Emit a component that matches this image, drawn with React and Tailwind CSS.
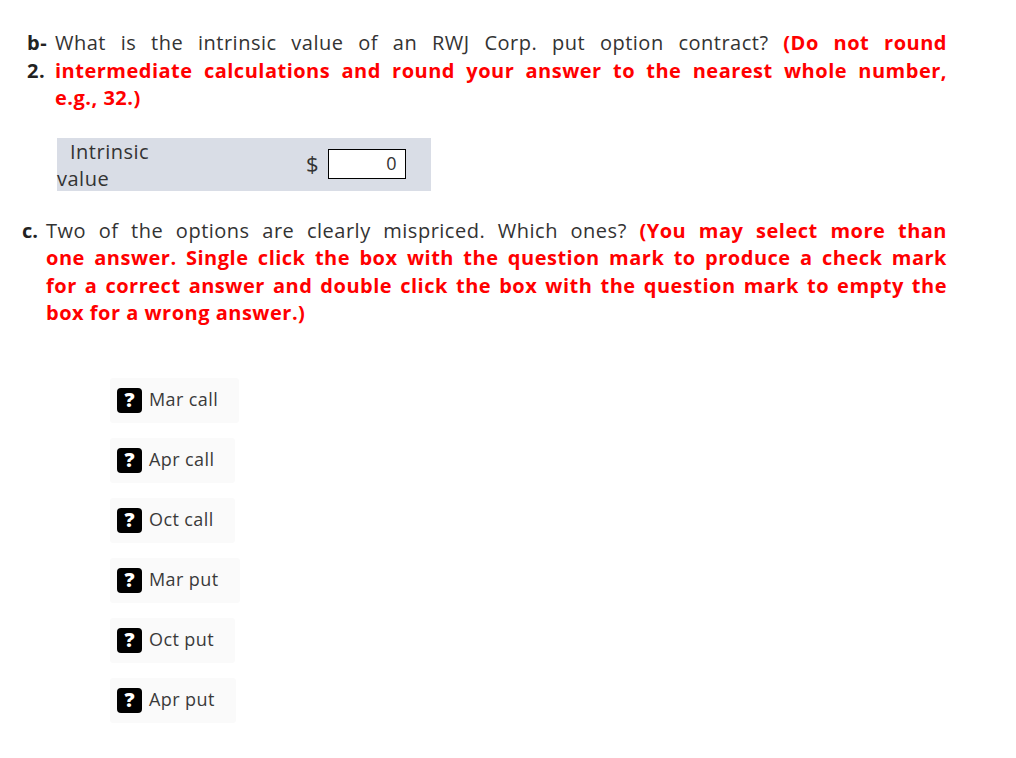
import React from "react";

const options = ["Mar call", "Apr call", "Oct call", "Mar put", "Oct put", "Apr put"];

function JLine({ children, last }) {
  return (
    <div className={last ? "text-left" : "text-justify [text-align-last:justify]"}>{children}</div>
  );
}

export default function App() {
  return (
    <div className="min-h-[758px] w-[1016px] bg-white text-[#333333] font-['Open_Sans',sans-serif] text-[20px] tracking-[0.5px] leading-[27.5px]">
      {/* Part b */}
      <div className="flex pt-[29px] pl-[27px] w-[947px]">
        <div className="w-[28px] shrink-0 font-bold text-[#222]">
          <div>b-</div>
          <div>2.</div>
        </div>
        <div className="flex-1">
          <JLine>
            What is the intrinsic value of an RWJ Corp. put option contract?{" "}
            <span className="font-bold text-[#ff0000]">(Do not round</span>
          </JLine>
          <JLine>
            <span className="font-bold text-[#ff0000]">intermediate calculations and round your answer to the nearest whole number,</span>
          </JLine>
          <JLine last>
            <span className="font-bold text-[#ff0000]">e.g., 32.)</span>
          </JLine>
        </div>
      </div>

      {/* Answer row */}
      <div className="ml-[57px] mt-[26px] w-[374px] h-[53px] bg-[#d9dde6] flex items-center">
        <div className="w-[100px] leading-[27px] indent-[13px] self-start">Intrinsic value</div>
        <div className="flex-1 flex items-center justify-end pr-[25px] gap-[9px]">
          <span className="text-[22px]">$</span>
          <div className="w-[78px] h-[30px] bg-white border border-black flex items-center justify-end pr-[8px] text-[18px]">0</div>
        </div>
      </div>

      {/* Part c */}
      <div className="flex mt-[26px] pl-[22px] w-[947px]">
        <div className="w-[24px] shrink-0 font-bold text-[#222] tracking-normal">c.</div>
        <div className="flex-1">
          <JLine>
            Two of the options are clearly mispriced. Which ones?{" "}
            <span className="font-bold text-[#ff0000]">(You may select more than</span>
          </JLine>
          <JLine>
            <span className="font-bold text-[#ff0000]">one answer. Single click the box with the question mark to produce a check mark</span>
          </JLine>
          <JLine>
            <span className="font-bold text-[#ff0000]">for a correct answer and double click the box with the question mark to empty the</span>
          </JLine>
          <JLine last>
            <span className="font-bold text-[#ff0000]">box for a wrong answer.)</span>
          </JLine>
        </div>
      </div>

      {/* Options */}
      <div className="ml-[110px] mt-[51px] flex flex-col items-start gap-[15px]">
        {options.map((o) => (
          <div key={o} className="h-[45px] bg-[#fafafa] rounded-[3px] flex items-center pl-[7px] pr-[21px] gap-[7px]">
            <div className="w-[25px] h-[25px] bg-black rounded-[4px] flex items-center justify-center text-white font-extrabold text-[20px] leading-none tracking-normal">?</div>
            <span className="text-[18px] tracking-[0.4px] text-[#3a3a3a]">{o}</span>
          </div>
        ))}
      </div>
    </div>
  );
}
